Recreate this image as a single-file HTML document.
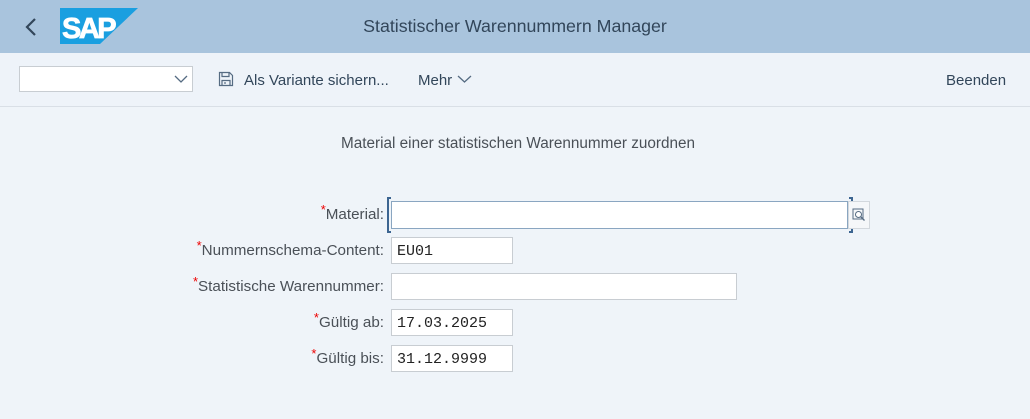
<!DOCTYPE html><html><head><meta charset="utf-8"><style>
body{margin:0;width:1030px;height:419px;background:#eff4f9;font-family:"Liberation Sans",sans-serif;position:relative;overflow:hidden;color:#32363a}
.hdr{position:absolute;left:0;top:0;width:1030px;height:53px;background:#a9c4dd}
.tb{position:absolute;left:0;top:53px;width:1030px;height:53px;background:#eef3f9;border-bottom:1px solid #d9dfe6}
.a{position:absolute}
.lbl{position:absolute;right:646px;font-size:15.2px;color:#4a5057;white-space:nowrap}
.lbl b{color:#e00;font-weight:normal;font-size:13px;position:relative;top:-5px}
.in{position:absolute;left:391px;height:27px;background:#fff;border:1px solid #c8cdd2;box-sizing:border-box;font-family:"Liberation Mono",monospace;font-size:15px;padding:5px 5px;color:#222}
</style></head><body>
<div class="hdr"></div>
<svg class="a" style="left:24px;top:17px" width="14" height="20"><path d="M11 2 L3 10 L11 18" stroke="#32465a" stroke-width="2.2" fill="none"/></svg>
<svg class="a" style="left:60px;top:8px" width="78" height="36"><polygon points="0,0 78,0 40,36 0,36" fill="#1a9fe0"/><text x="2" y="30" font-family="Liberation Sans" font-weight="bold" font-size="29" fill="#fff" stroke="#fff" stroke-width="0.8" letter-spacing="-2.5">SAP</text></svg>
<div class="a" style="left:0;width:1030px;top:16px;text-align:center;font-size:17.8px;color:#32465a">Statistischer Warennummern Manager</div>
<div class="tb"></div>
<div class="a" style="left:19px;top:66px;width:174px;height:26px;background:#fff;border:1px solid #c8cdd2;box-sizing:border-box"></div>
<svg class="a" style="left:174px;top:74px" width="14" height="10"><path d="M1 2 L7 8 L13 2" stroke="#556b82" stroke-width="1.3" fill="none"/></svg>
<svg class="a" style="left:218px;top:71px" width="16" height="16"><path d="M1.5 1.5h10l3 3v10h-13z M4 1.5v4h7v-4 M4 14.5v-5h8v5 M7 11v2" stroke="#556b82" stroke-width="1.2" fill="none"/></svg>
<div class="a" style="left:244px;top:72px;font-size:15px;color:#32465a">Als Variante sichern...</div>
<div class="a" style="left:418px;top:72px;font-size:15px;color:#32465a">Mehr</div>
<svg class="a" style="left:457px;top:74px" width="15" height="10"><path d="M1 2 L7.5 8 L14 2" stroke="#556b82" stroke-width="1.3" fill="none"/></svg>
<div class="a" style="left:946px;top:72px;font-size:15px;color:#32465a">Beenden</div>
<div class="a" style="left:0;width:1036px;top:135px;text-align:center;font-size:15.3px;color:#4a5057">Material einer statistischen Warennummer zuordnen</div>
<div class="lbl" style="top:206px"><b>*</b>Material:</div>
<div class="lbl" style="top:242px"><b>*</b>Nummernschema-Content:</div>
<div class="lbl" style="top:278px"><b>*</b>Statistische Warennummer:</div>
<div class="lbl" style="top:314px"><b>*</b>Gültig ab:</div>
<div class="lbl" style="top:350px"><b>*</b>Gültig bis:</div>
<div class="in" style="top:201px;width:457px;height:28px;border-color:#8aa6c1"></div>
<svg class="a" style="left:386px;top:197px" width="468" height="36"><path d="M5 1h-3v34h3 M463 1h3v34h-3" stroke="#3c6591" stroke-width="2" fill="none"/></svg>
<div class="a" style="left:848px;top:201px;width:22px;height:28px;background:#f5f7f9;border:1px solid #d3d8dd;box-sizing:border-box"></div>
<svg class="a" style="left:852px;top:208px" width="14" height="14"><rect x="1" y="1" width="10" height="10" fill="none" stroke="#556b82"/><circle cx="6.5" cy="6.5" r="3" fill="#fff" stroke="#556b82"/><path d="M8.5 8.5l4 4" stroke="#556b82" stroke-width="1.3"/></svg>
<div class="in" style="top:237px;width:122px">EU01</div>
<div class="in" style="top:273px;width:346px"></div>
<div class="in" style="top:309px;width:122px">17.03.2025</div>
<div class="in" style="top:345px;width:122px">31.12.9999</div>
</body></html>
